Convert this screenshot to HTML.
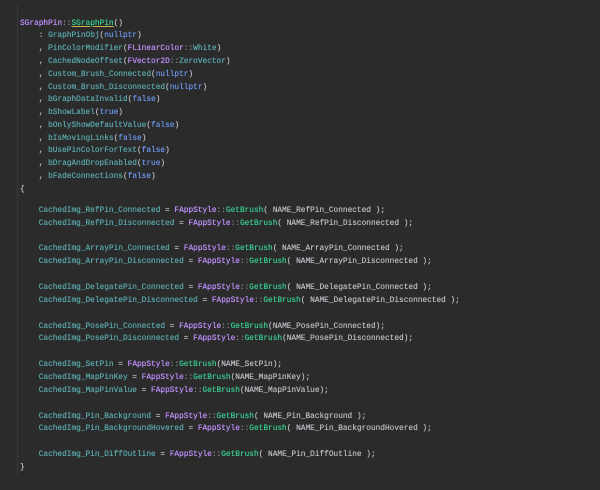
<!DOCTYPE html>
<html><head><meta charset="utf-8"><style>
html,body{margin:0;padding:0;background:#2b2b2b;width:600px;height:490px;overflow:hidden}
.g{position:absolute;left:17px;top:5px;width:1px;height:470px;background:#3a3a3a}
pre{position:absolute;left:20px;margin:0;font-family:"Liberation Mono",monospace;font-size:7.8px;color:#bcbec4;white-space:pre;text-shadow:0 0 0.4px currentColor}
#a{top:17.6px;line-height:12.78px}
#b{top:204.8px;line-height:12.86px}
.m{color:#5ba9ad}.f{color:#39cc8f}.t{color:#c191ff}.k{color:#6c95eb}.o{color:#8a8a8a}
.u{text-decoration:underline;text-decoration-color:#c8b44a}
</style></head><body>
<div class="g"></div>
<pre id="a"><span class="t">SGraphPin</span><span class="o">::</span><span class="f u">SGraphPin</span>()
    : <span class="m">GraphPinObj</span>(<span class="k">nullptr</span>)
    , <span class="m">PinColorModifier</span>(<span class="t">FLinearColor</span><span class="o">::</span><span class="m">White</span>)
    , <span class="m">CachedNodeOffset</span>(<span class="t">FVector2D</span><span class="o">::</span><span class="m">ZeroVector</span>)
    , <span class="m">Custom_Brush_Connected</span>(<span class="k">nullptr</span>)
    , <span class="m">Custom_Brush_Disconnected</span>(<span class="k">nullptr</span>)
    , <span class="m">bGraphDataInvalid</span>(<span class="k">false</span>)
    , <span class="m">bShowLabel</span>(<span class="k">true</span>)
    , <span class="m">bOnlyShowDefaultValue</span>(<span class="k">false</span>)
    , <span class="m">bIsMovingLinks</span>(<span class="k">false</span>)
    , <span class="m">bUsePinColorForText</span>(<span class="k">false</span>)
    , <span class="m">bDragAndDropEnabled</span>(<span class="k">true</span>)
    , <span class="m">bFadeConnections</span>(<span class="k">false</span>)
{</pre>
<pre id="b">    <span class="m">CachedImg_RefPin_Connected</span> = <span class="t">FAppStyle</span><span class="o">::</span><span class="f">GetBrush</span>( NAME_RefPin_Connected );
    <span class="m">CachedImg_RefPin_Disconnected</span> = <span class="t">FAppStyle</span><span class="o">::</span><span class="f">GetBrush</span>( NAME_RefPin_Disconnected );

    <span class="m">CachedImg_ArrayPin_Connected</span> = <span class="t">FAppStyle</span><span class="o">::</span><span class="f">GetBrush</span>( NAME_ArrayPin_Connected );
    <span class="m">CachedImg_ArrayPin_Disconnected</span> = <span class="t">FAppStyle</span><span class="o">::</span><span class="f">GetBrush</span>( NAME_ArrayPin_Disconnected );

    <span class="m">CachedImg_DelegatePin_Connected</span> = <span class="t">FAppStyle</span><span class="o">::</span><span class="f">GetBrush</span>( NAME_DelegatePin_Connected );
    <span class="m">CachedImg_DelegatePin_Disconnected</span> = <span class="t">FAppStyle</span><span class="o">::</span><span class="f">GetBrush</span>( NAME_DelegatePin_Disconnected );

    <span class="m">CachedImg_PosePin_Connected</span> = <span class="t">FAppStyle</span><span class="o">::</span><span class="f">GetBrush</span>(NAME_PosePin_Connected);
    <span class="m">CachedImg_PosePin_Disconnected</span> = <span class="t">FAppStyle</span><span class="o">::</span><span class="f">GetBrush</span>(NAME_PosePin_Disconnected);

    <span class="m">CachedImg_SetPin</span> = <span class="t">FAppStyle</span><span class="o">::</span><span class="f">GetBrush</span>(NAME_SetPin);
    <span class="m">CachedImg_MapPinKey</span> = <span class="t">FAppStyle</span><span class="o">::</span><span class="f">GetBrush</span>(NAME_MapPinKey);
    <span class="m">CachedImg_MapPinValue</span> = <span class="t">FAppStyle</span><span class="o">::</span><span class="f">GetBrush</span>(NAME_MapPinValue);

    <span class="m">CachedImg_Pin_Background</span> = <span class="t">FAppStyle</span><span class="o">::</span><span class="f">GetBrush</span>( NAME_Pin_Background );
    <span class="m">CachedImg_Pin_BackgroundHovered</span> = <span class="t">FAppStyle</span><span class="o">::</span><span class="f">GetBrush</span>( NAME_Pin_BackgroundHovered );

    <span class="m">CachedImg_Pin_DiffOutline</span> = <span class="t">FAppStyle</span><span class="o">::</span><span class="f">GetBrush</span>( NAME_Pin_DiffOutline );
}</pre>
</body></html>
